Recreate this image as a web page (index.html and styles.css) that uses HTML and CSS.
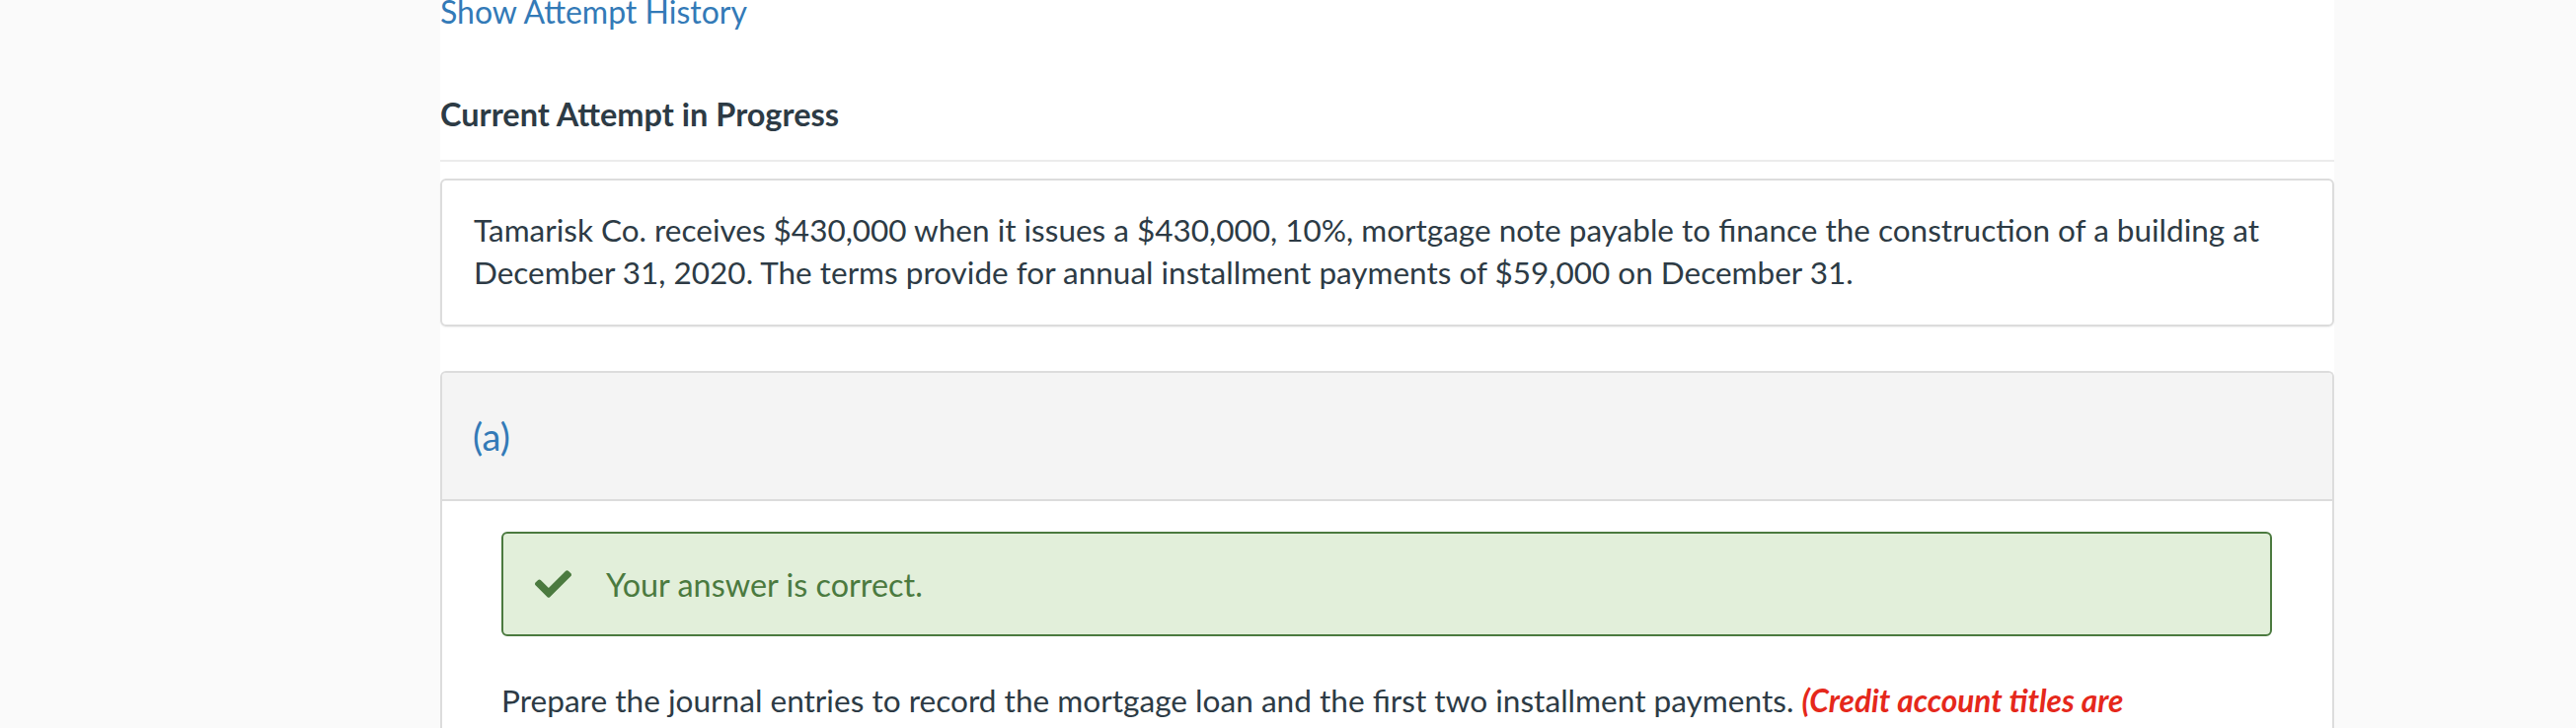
FILE: index.html
```html
<!DOCTYPE html>
<html lang="en">
<head>
<meta charset="utf-8">
<title>Current Attempt in Progress</title>
<link rel="stylesheet" href="styles.css">
</head>
<body>
<main class="page">
  <a class="history" href="#">Show Attempt History</a>
  <h2 class="attempt-title">Current Attempt in Progress</h2>
  <div class="question-card">
    <p>Tamarisk Co. receives $430,000 when it issues a $430,000, 10%, mortgage note payable to finance the construction of a building at December 31, 2020. The terms provide for annual installment payments of $59,000 on December 31.</p>
  </div>
  <section class="part-card">
    <header class="part-header">(a)</header>
    <div class="part-body">
      <div class="feedback">
        <svg class="check" viewBox="0 64 512 384" aria-hidden="true"><path d="M173.898 439.404l-166.4-166.4c-9.997-9.997-9.997-26.206 0-36.204l36.203-36.204c9.997-9.998 26.207-9.998 36.204 0L192 312.69 432.095 72.596c9.997-9.997 26.207-9.997 36.204 0l36.203 36.204c9.997 9.997 9.997 26.206 0 36.204l-294.4 294.401c-9.998 9.997-26.207 9.997-36.204-.001z"/></svg>
        <span class="feedback-text">Your answer is correct.</span>
      </div>
      <p class="instructions">Prepare the journal entries to record the mortgage loan and the first two installment payments. <em class="warn">(Credit account titles are automatically indented when the amount is entered. Do not indent manually.)</em></p>
    </div>
  </section>
</main>
</body>
</html>
```
FILE: styles.css
```css
* { box-sizing: border-box; }
html, body { margin: 0; padding: 0; }
body {
  background: #fafafa;
  font-family: Lato, "Open Sans", sans-serif;
  color: #2d3b45;
  overflow: hidden;
}
.page {
  margin-left: 446px;
  width: 1919px;
  min-height: 738px;
  background: #fff;
  display: flex;
  flex-direction: column;
}
.history {
  display: block;
  margin-top: -6px;
  font-size: 32px;
  line-height: 36px;
  color: #337ab7;
  text-decoration: none;
  align-self: flex-start;
}
.attempt-title {
  margin: 68px 0 0;
  padding-bottom: 28px;
  border-bottom: 2px solid #ececec;
  font-size: 32.5px;
  line-height: 36px;
  font-weight: 700;
  color: #2d3b45;
}
.question-card {
  margin-top: 17px;
  border: 2px solid #dcdcdc;
  border-radius: 6px;
  padding: 29px 32px 31px;
  box-shadow: 0 1px 2px rgba(0,0,0,0.06);
}
.question-card p {
  margin: 0;
  font-size: 31.5px;
  line-height: 43px;
}
.part-card {
  margin-top: 45px;
  border: 2px solid #dcdcdc;
  border-bottom: none;
  border-radius: 6px 6px 0 0;
  flex: 1;
}
.part-header {
  height: 130px;
  background: #f4f4f4;
  border-bottom: 2px solid #dcdcdc;
  border-radius: 4px 4px 0 0;
  display: flex;
  align-items: center;
  padding-left: 31px;
  font-size: 38px;
  line-height: 44px;
  color: #337ab7;
}
.part-body {
  padding: 31px 61px 0 60px;
}
.feedback {
  display: flex;
  align-items: center;
  height: 106px;
  border: 2px solid #4b7a3f;
  border-radius: 6px;
  background: #e2efda;
  padding-left: 32px;
}
.check {
  width: 37px;
  height: 28px;
  fill: #4b7a3f;
  flex: none;
}
.feedback-text {
  margin-left: 35px;
  font-size: 32.4px;
  line-height: 43px;
  color: #4b7a3f;
}
.instructions {
  margin: 44px 0 0;
  font-size: 31.6px;
  line-height: 43px;
}
.warn {
  font-style: italic;
  font-weight: 700;
  color: #e5281b;
}
```
